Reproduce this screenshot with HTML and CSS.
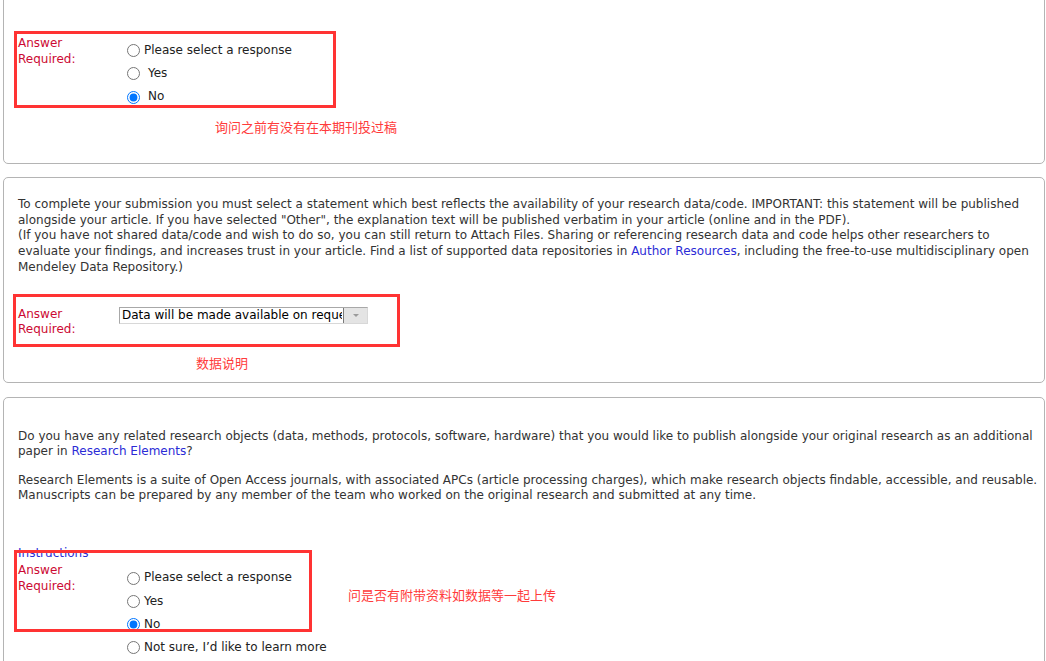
FILE: index.html
```html
<!DOCTYPE html>
<html lang="en">
<head>
<meta charset="utf-8">
<title>Submission questions</title>
<link rel="stylesheet" href="styles.css">
</head>
<body>
<div class="panel panel-first">
  <div class="question">
    <div class="qlabel">Answer Required:</div>
    <div class="options">
      <label class="opt"><input type="radio" name="q1"><span>Please select a response</span></label>
      <label class="opt"><input type="radio" name="q1"><span class="spaced">Yes</span></label>
      <label class="opt"><input type="radio" name="q1" checked><span class="spaced">No</span></label>
    </div>
    <div class="mark mark-1"></div>
  </div>
  <p class="note note-1">询问之前有没有在本期刊投过稿</p>
</div>

<div class="panel panel-second">
  <p class="desc desc-data">To complete your submission you must select a statement which best reflects the availability of your research data/code. IMPORTANT: this statement will be published alongside your article. If you have selected "Other", the explanation text will be published verbatim in your article (online and in the PDF).<br>(If you have not shared data/code and wish to do so, you can still return to Attach Files. Sharing or referencing research data and code helps other researchers to evaluate your findings, and increases trust in your article. Find a list of supported data repositories in <a href="#">Author Resources</a>, including the free-to-use multidisciplinary open Mendeley Data Repository.)</p>
  <div class="question question-select">
    <div class="qlabel qlabel-select">Answer Required:</div>
    <div class="select-wrap">
      <select class="select">
        <option>Data will be made available on request</option>
      </select>
      <span class="select-arrow"></span>
    </div>
    <div class="mark mark-2"></div>
  </div>
  <p class="note note-2">数据说明</p>
</div>

<div class="panel panel-third">
  <p class="desc">Do you have any related research objects (data, methods, protocols, software, hardware) that you would like to publish alongside your original research as an additional paper in <a href="#">Research Elements</a>?</p>
  <p class="desc desc-next">Research Elements is a suite of Open Access journals, with associated APCs (article processing charges), which make research objects findable, accessible, and reusable. Manuscripts can be prepared by any member of the team who worked on the original research and submitted at any time.</p>
  <a class="instructions" href="#">Instructions</a>
  <div class="question question-last">
    <div class="qlabel">Answer Required:</div>
    <div class="options">
      <label class="opt"><input type="radio" name="q3"><span>Please select a response</span></label>
      <label class="opt"><input type="radio" name="q3"><span>Yes</span></label>
      <label class="opt"><input type="radio" name="q3" checked><span>No</span></label>
      <label class="opt"><input type="radio" name="q3"><span>Not sure, I’d like to learn more</span></label>
    </div>
    <div class="mark mark-3"></div>
    <p class="note note-3">问是否有附带资料如数据等一起上传</p>
  </div>
</div>
</body>
</html>
```

FILE: styles.css
```css
html, body {
  margin: 0;
  padding: 0;
  background: #ffffff;
  overflow: hidden;
}

body {
  font-family: "DejaVu Sans", Verdana, sans-serif;
  font-size: 12px;
  line-height: 15.5px;
  color: #333333;
}

a {
  color: #2b2bd6;
  text-decoration: none;
}

.panel {
  box-sizing: border-box;
  width: 1042px;
  margin-left: 3px;
  border: 1px solid #b4b4b4;
  border-radius: 5px;
  padding-left: 14px;
  padding-right: 2px;
}

.panel-first {
  margin-top: -10px;
  padding-top: 45px;
  padding-bottom: 27.5px;
}

.panel-second {
  margin-top: 13px;
  padding-top: 19px;
  padding-bottom: 10.5px;
}

.panel-third {
  margin-top: 14px;
  padding-top: 31px;
  padding-bottom: 20px;
}

.desc {
  margin: 0;
}

.desc-data {
  line-height: 15.75px;
}

.desc-next {
  margin-top: 13px;
}

.question {
  position: relative;
  display: flex;
  align-items: flex-start;
}

.qlabel {
  width: 70px;
  margin-right: 39px;
  color: #cc0a33;
}

.qlabel-select {
  margin-right: 31px;
}

.options {
  padding-top: 3px;
}

.opt {
  display: flex;
  align-items: center;
  gap: 4px;
  height: 23.3px;
  color: #222222;
}

.opt input {
  width: 13px;
  height: 13px;
  margin: 0;
}

.spaced {
  margin-left: 4px;
}

.question-select {
  margin-top: 31.25px;
}

.select-wrap {
  position: relative;
  width: 249px;
  height: 17px;
}

.select {
  -webkit-appearance: none;
  appearance: none;
  box-sizing: border-box;
  width: 249px;
  height: 17px;
  margin: 0;
  padding: 0 25px 0 2px;
  border: 1px solid #a8a8a8;
  border-right-color: #d8d8d8;
  border-bottom-color: #d8d8d8;
  border-radius: 0;
  background: #ffffff;
  font-family: "DejaVu Sans", Verdana, sans-serif;
  font-size: 12px;
  line-height: 15px;
  color: #000000;
}

.select-arrow {
  position: absolute;
  top: 1px;
  right: 1px;
  width: 23px;
  height: 15px;
  background: #e4e4e4;
  border-left: 1px solid #7a7a7a;
  display: flex;
  align-items: center;
  justify-content: center;
  pointer-events: none;
}

.select-arrow::after {
  content: "";
  display: block;
  width: 0;
  height: 0;
  border-left: 3.5px solid transparent;
  border-right: 3.5px solid transparent;
  border-top: 3px solid #9a9a9a;
}

.note {
  margin: 0;
  font-family: "Noto Sans CJK SC", "DejaVu Sans", sans-serif;
  font-size: 13px;
  line-height: 17px;
  color: #ff3b3b;
}

.note-1 {
  margin-top: 9.5px;
  padding-left: 197px;
}

.note-2 {
  margin-top: 16.5px;
  padding-left: 178px;
}

.note-3 {
  position: absolute;
  left: 330px;
  top: 23px;
  white-space: nowrap;
}

.instructions {
  display: block;
  width: max-content;
  margin-top: 42px;
  height: 15.5px;
}

.question-last {
  margin-top: 2px;
}

.mark {
  position: absolute;
  box-sizing: border-box;
  border: 3px solid #ff3333;
  pointer-events: none;
}

.mark-1 {
  left: -4px;
  top: -5px;
  width: 322px;
  height: 77px;
}

.mark-2 {
  left: -5px;
  top: -13px;
  width: 387px;
  height: 53px;
}

.mark-3 {
  left: -4px;
  top: -13.5px;
  width: 298px;
  height: 82px;
}
```
